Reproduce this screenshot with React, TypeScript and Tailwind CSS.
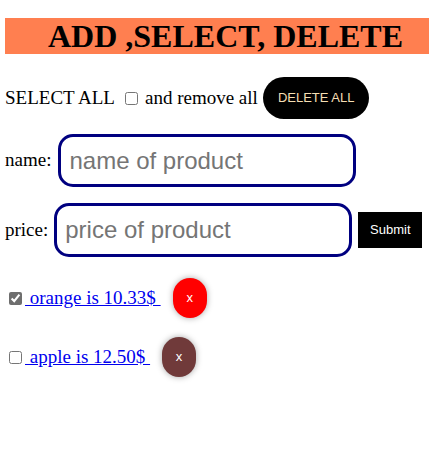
import { useState } from 'react'

type Product = { name: string; price: string; checked: boolean; color: string }

const initial: Product[] = [
    { name: 'orange', price: '10.33', checked: true, color: 'bg-[#ff0000]' },
    { name: 'apple', price: '12.50', checked: false, color: 'bg-[#703a3a]' },
]

export default function App() {
    const [items, setItems] = useState(initial)

    const toggle = (i: number) =>
        setItems(items.map((p, j) => (j === i ? { ...p, checked: !p.checked } : p)))

    return (
        <div className="w-[429px] h-[476px] overflow-hidden bg-white font-['Liberation_Serif',serif] text-[19px] text-black">
            {/* header */}
            <div className="mt-[18px] ml-[5px] w-[441px] h-[36px] bg-[#ff7f50] flex items-center justify-center">
                <h1 className="text-[32px] font-bold leading-none">ADD ,SELECT, DELETE</h1>
            </div>

            {/* select all row */}
            <div className="mt-[23px] ml-[5px] flex items-center">
                <span>SELECT ALL</span>
                <input type="checkbox" className="ml-[10px] mr-[7px] w-[13px] h-[13px]" />
                <span>and remove all</span>
                <button className="ml-[5px] h-[42px] px-[15px] rounded-full bg-black text-[#f5deb3] text-[13px] font-['Liberation_Sans',Arial,sans-serif]">
                    DELETE ALL
                </button>
            </div>

            {/* name row */}
            <div className="mt-[15px] ml-[5px] flex items-center">
                <label>name:</label>
                <input
                    placeholder="name of product"
                    className="ml-[7px] w-[298px] h-[53px] border-[3px] border-[#000080] rounded-[15px] px-[8px] text-[24px] font-['Liberation_Sans',Arial,sans-serif] placeholder:text-[#757575] outline-none"
                />
            </div>

            {/* price row */}
            <div className="mt-[16px] ml-[5px] flex items-center">
                <label>price:</label>
                <input
                    placeholder="price of product"
                    className="ml-[6px] w-[298px] h-[54px] border-[3px] border-[#000080] rounded-[15px] px-[8px] text-[24px] font-['Liberation_Sans',Arial,sans-serif] placeholder:text-[#757575] outline-none"
                />
                <button className="ml-[6px] w-[64px] h-[36px] bg-black text-white text-[13px] font-['Liberation_Sans',Arial,sans-serif]">
                    Submit
                </button>
            </div>

            {/* product list */}
            <div className="mt-[21px] flex flex-col gap-[19px]">
                {items.map((p, i) => (
                    <div key={p.name} className="flex items-center">
                        <input
                            type="checkbox"
                            checked={p.checked}
                            onChange={() => toggle(i)}
                            className="ml-[9px] mr-[3px] w-[13px] h-[13px] accent-[#6e6e6e]"
                        />
                        <a href="#" className="whitespace-pre text-[#0000ee] underline">
                            {` ${p.name} is ${p.price}$ `}
                        </a>
                        <button
                            className={`${p.color} ml-[12px] w-[34px] h-[40px] rounded-full text-white text-[13px] font-['Liberation_Sans',Arial,sans-serif] shadow-[0_0_6px_rgba(0,0,0,0.35)]`}
                        >
                            x
                        </button>
                    </div>
                ))}
            </div>
        </div>
    )
}
